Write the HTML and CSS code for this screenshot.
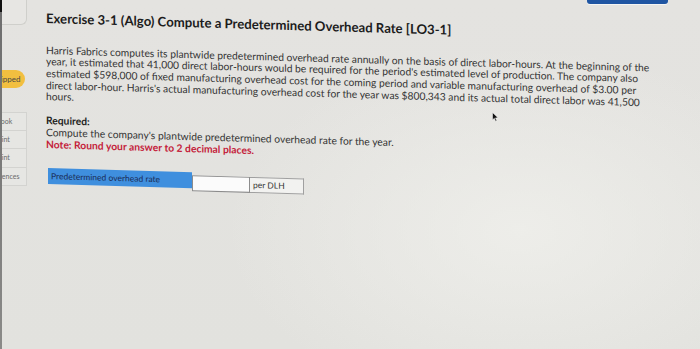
FILE: index.html
```html
<!DOCTYPE html>
<html>
<head>
<meta charset="utf-8">
<link rel="stylesheet" href="styles.css">
</head>
<body>
<div class="screen">
  <aside class="sidebar">
    <div class="edge"></div>
    <div class="side-inner">
      <div class="top-box"></div>
      <div class="pill">Skipped</div>
      <ul class="side-list">
        <li>eBook</li>
        <li>Print</li>
        <li>Print</li>
        <li>References</li>
      </ul>
    </div>
  </aside>
  <main class="main">
    <div class="topbar"><div class="btn"></div></div>
    <section class="content">
      <h1 class="title">Exercise 3-1 (Algo) Compute a Predetermined Overhead Rate [LO3-1]</h1>
      <p class="para">Harris Fabrics computes its plantwide predetermined overhead rate annually on the basis of direct labor-hours. At the beginning of the<br>year, it estimated that 41,000 direct labor-hours would be required for the period's estimated level of production. The company also<br>estimated $598,000 of fixed manufacturing overhead cost for the coming period and variable manufacturing overhead of $3.00 per<br>direct labor-hour. Harris's actual manufacturing overhead cost for the year was $800,343 and its actual total direct labor was 41,500<br>hours.</p>
      <div class="req">
        <div class="req-title">Required:</div>
        <div>Compute the company's plantwide predetermined overhead rate for the year.</div>
        <div class="note">Note: Round your answer to 2 decimal places.</div>
      </div>
      <div class="row">
        <div class="label">Predetermined overhead rate</div>
        <div class="input"></div>
        <div class="unit">per DLH</div>
      </div>
    </section>
  </main>
</div>
<svg class="cursor" width="7" height="10" viewBox="0 0 7 10"><path d="M0.5 0.5 L0.5 8 L2.3 6.3 L3.6 9.3 L4.8 8.8 L3.5 5.9 L6 5.8 Z" fill="#111" stroke="#fff" stroke-width="0.5"/></svg>
</body>
</html>
```
FILE: styles.css
```css
html, body {
  margin: 0;
  padding: 0;
  width: 700px;
  height: 349px;
  overflow: hidden;
}
body {
  background:
    radial-gradient(ellipse 420px 260px at 520px 230px, rgba(240,240,236,0.8), rgba(240,240,236,0) 70%),
    linear-gradient(180deg, #e4e3e0 0%, #e2e2de 100%);
  font-family: "Lato", "Liberation Sans", sans-serif;
  color: #333;
  position: relative;
}
.screen {
  display: flex;
  height: 349px;
}
.sidebar {
  display: flex;
  width: 27px;
  flex: none;
}
.edge {
  width: 2px;
  flex: none;
  background: linear-gradient(180deg, #111 0, #111 12px, #6e6e6e 12px, #8a8a88 100%);
}
.side-inner {
  width: 25px;
  overflow: hidden;
  display: flex;
  flex-direction: column;
}
.top-box {
  height: 25px;
  margin-left: -12px;
  width: 37px;
  box-sizing: border-box;
  border: 1px solid #cfcfcb;
  border-top: none;
  border-radius: 0 0 6px 0;
  background: #e7e6e3;
  flex: none;
}
.pill {
  margin-top: 45px;
  margin-left: -14px;
  width: 37px;
  height: 18px;
  border-radius: 9px;
  background: #f2bf40;
  color: #4a4a44;
  font-size: 8px;
  line-height: 18px;
  text-align: center;
  flex: none;
}
.side-list {
  list-style: none;
  margin: 24px 0 0 -24px;
  padding: 0;
  width: 49px;
}
.side-list li {
  height: 18.5px;
  box-sizing: border-box;
  border: 1px solid #d3d3d0;
  border-top: none;
  background: #e6e6e3;
  font-size: 7px;
  line-height: 17px;
  color: #6a6a6a;
  text-align: center;
  white-space: nowrap;
}
.side-list li:first-child {
  border-top: 1px solid #d3d3d0;
}
.main {
  flex: 1;
  padding-left: 19px;
}
.topbar {
  height: 4px;
  display: flex;
  justify-content: flex-end;
  padding-right: 32px;
}
.btn {
  width: 81px;
  height: 4px;
  background: #1f55a2;
  border-radius: 0 0 3px 3px;
  box-shadow: 0 1px 0 #f4f4f2;
}
.content {
  margin-top: 6px;
  transform: skewY(1.65deg);
  transform-origin: 0 0;
}
.title {
  margin: 0;
  font-size: 13.15px;
  line-height: 16px;
  font-weight: 700;
  color: #1c1c1c;
  white-space: nowrap;
}
.para {
  margin: 18.5px 0 0;
  font-size: 10.3px;
  line-height: 11.7px;
  white-space: nowrap;
  color: #343434;
}
.req {
  margin-top: 12.2px;
  font-size: 10.3px;
  line-height: 11.7px;
  color: #343434;
  white-space: nowrap;
}
.req-title {
  font-weight: 700;
  color: #222;
}
.note {
  font-weight: 700;
  color: #c42039;
}
.row {
  margin-top: 18px;
  margin-left: 2px;
  display: flex;
  align-items: flex-start;
}
.label {
  width: 144px;
  height: 16px;
  background: #3f8fde;
  color: #1a2b55;
  font-size: 8.5px;
  line-height: 16px;
  padding-left: 3px;
  box-sizing: border-box;
}
.input {
  width: 58px;
  height: 16px;
  margin-top: 2.5px;
  background: #fbfbfb;
  border: 1px solid #8c8c8c;
  box-sizing: border-box;
}
.unit {
  width: 54px;
  height: 16px;
  margin-top: 2.5px;
  background: #f2f2f0;
  border: 1px solid #a0a0a0;
  border-left: none;
  box-sizing: border-box;
  font-size: 8.5px;
  line-height: 14px;
  padding-left: 3px;
  color: #333;
}
.cursor {
  position: absolute;
  left: 492px;
  top: 112px;
}
```
